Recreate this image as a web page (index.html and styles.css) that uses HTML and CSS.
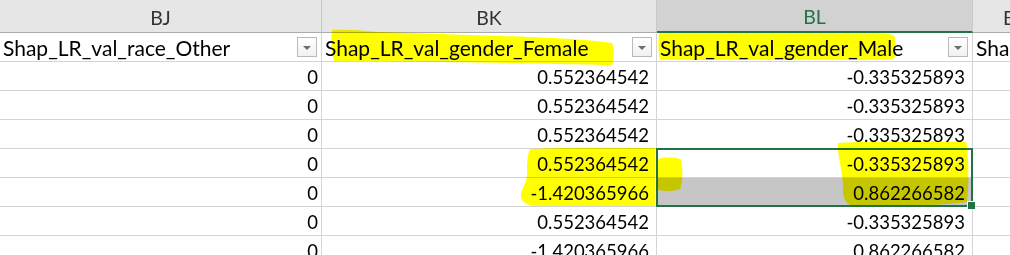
FILE: index.html
```html
<!DOCTYPE html>
<html>
<head>
<meta charset="utf-8">
<link rel="stylesheet" href="styles.css">
</head>
<body>
<div class="sheet">
  <table class="grid">
    <colgroup>
      <col class="c1"><col class="c2"><col class="c3"><col class="c4">
    </colgroup>
    <tr class="letters">
      <th>BJ</th><th>BK</th><th class="sel">BL</th><th class="cut">BM</th>
    </tr>
    <tr class="head">
      <td><div class="hcell"><span class="htext">Shap_LR_val_race_Other</span><span class="filter"></span></div></td>
      <td><div class="hcell"><span class="htext">Shap_LR_val_gender_Female</span><span class="filter"></span></div></td>
      <td><div class="hcell"><span class="htext">Shap_LR_val_gender_Male</span><span class="filter"></span></div></td>
      <td><div class="hcell"><span class="htext">Shap_LR_val_gender_Unknown</span></div></td>
    </tr>
    <tr><td class="n n1">0</td><td class="n">0.552364542</td><td class="n">-0.335325893</td><td></td></tr>
    <tr><td class="n n1">0</td><td class="n">0.552364542</td><td class="n">-0.335325893</td><td></td></tr>
    <tr><td class="n n1">0</td><td class="n">0.552364542</td><td class="n">-0.335325893</td><td></td></tr>
    <tr><td class="n n1">0</td><td class="n">0.552364542</td><td class="n">-0.335325893</td><td></td></tr>
    <tr><td class="n n1">0</td><td class="n">-1.420365966</td><td class="n selfill">0.862266582</td><td></td></tr>
    <tr><td class="n n1">0</td><td class="n">0.552364542</td><td class="n">-0.335325893</td><td></td></tr>
    <tr><td class="n n1">0</td><td class="n">-1.420365966</td><td class="n">0.862266582</td><td></td></tr>
  </table>

  <div class="selbox"></div>
  <div class="handle"></div>

  <svg class="marker" width="1010" height="255" viewBox="0 0 1010 255">
    <path d="M332 30 C 350 29, 365 31, 380 32 L 500 36 C 560 38, 590 40, 612 43 C 615 50, 614 58, 612 65 C 560 64, 450 62, 380 61 L 334 61 C 331 50, 331 40, 332 30 Z"/>
    <path d="M659 33 L 880 33 C 890 34, 895 35, 895 38 L 895 57 C 893 60, 885 60, 880 60 L 660 60 C 658 50, 658 40, 659 33 Z"/>
    <path d="M530 149 C 560 147, 620 148, 655 148 L 655 206 L 535 206 C 524 205, 520 200, 521 193 C 524 185, 528 180, 527 170 C 527 160, 528 153, 530 149 Z"/>
    <path d="M658 159 C 665 157, 678 157, 681 160 C 683 168, 683 182, 680 189 C 672 192, 664 191, 657 190 Z"/>
    <path d="M838 143 C 870 141, 930 141, 966 142 C 969 150, 969 190, 967 202 C 940 206, 880 207, 852 206 C 845 203, 842 197, 843 185 C 842 170, 839 160, 838 150 Z"/>
  </svg>
</div>
</body>
</html>
```

FILE: styles.css
```css
html, body {
  margin: 0;
  padding: 0;
  background: #ffffff;
}

.sheet {
  position: relative;
  width: 1010px;
  height: 255px;
  overflow: hidden;
  font-family: "Lato", "Open Sans", sans-serif;
}

.grid {
  border-collapse: separate;
  border-spacing: 0;
  table-layout: fixed;
  width: 1073px;
}

.c1 { width: 322px; }
.c2 { width: 335px; }
.c3 { width: 316px; }
.c4 { width: 100px; }

.grid th,
.grid td {
  box-sizing: border-box;
  padding: 0;
  border-right: 1px solid #d4d4d4;
  border-bottom: 1px solid #d4d4d4;
  white-space: nowrap;
  overflow: hidden;
}

.letters th {
  height: 33px;
  background: #e6e6e6;
  color: #333333;
  font-weight: normal;
  font-size: 19.5px;
  text-align: center;
  vertical-align: middle;
  padding-top: 2px;
  border-right: 1px solid #c9c9c9;
  border-bottom: 1px solid #ababab;
}

.letters th.sel {
  background: #d2d2d2;
  color: #217346;
  border-bottom: 2px solid #217346;
}

.letters th.cut {
  text-align: left;
  padding-left: 30px;
}

.grid tr {
  height: 29px;
}

.head td {
  height: 29px;
  font-size: 21px;
  color: #000;
}

.hcell {
  display: flex;
  align-items: center;
  justify-content: space-between;
  padding: 0 4px 0 3px;
  height: 28px;
}

.htext {
  overflow: hidden;
  padding-top: 1px;
}

.filter {
  flex: none;
  width: 20px;
  height: 20px;
  box-sizing: border-box;
  border: 1px solid #b9b9b9;
  background: linear-gradient(#ffffff, #f1f1f1);
  position: relative;
}

.filter::after {
  content: "";
  position: absolute;
  left: 5px;
  top: 8px;
  border-left: 4px solid transparent;
  border-right: 4px solid transparent;
  border-top: 4px solid #6d6d6d;
}

.grid td.n {
  height: 29px;
  font-size: 18.5px;
  text-align: right;
  vertical-align: bottom;
  line-height: 26px;
  padding-right: 7px;
  color: #000;
}

.grid td.n1 {
  padding-right: 3px;
}

.grid td.selfill {
  background: #c6c6c6;
}

.selbox {
  position: absolute;
  left: 656px;
  top: 148px;
  width: 317px;
  height: 59px;
  box-sizing: border-box;
  border: 2px solid #217346;
}

.handle {
  position: absolute;
  left: 968px;
  top: 202px;
  width: 7px;
  height: 7px;
  background: #217346;
  box-shadow: -1px -1px 0 #ffffff;
}

.marker {
  position: absolute;
  left: 0;
  top: 0;
  pointer-events: none;
  mix-blend-mode: multiply;
}

.marker path {
  fill: #ffff00;
}
```
